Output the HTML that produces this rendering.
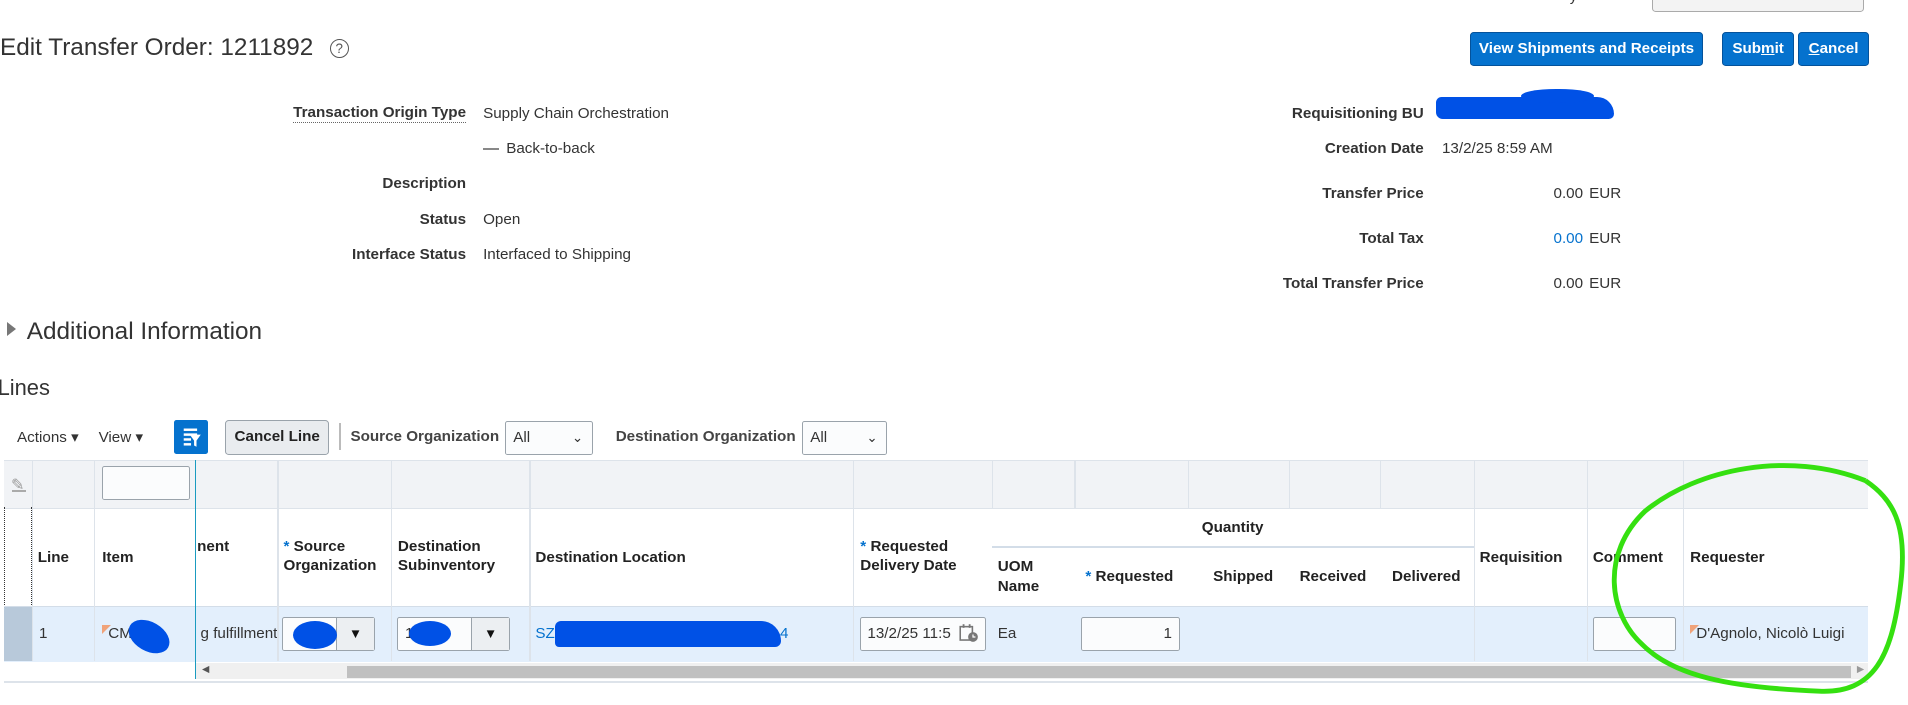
<!DOCTYPE html>
<html><head><meta charset="utf-8"><style>
html,body{margin:0;padding:0;background:#fff;overflow:hidden}
body{width:1908px;height:705px}
#w{position:relative;width:1568px;height:580px;zoom:1.21683;font-family:"Liberation Sans",Arial,sans-serif;font-size:12.5px;color:#333;overflow:hidden}
.a{position:absolute;white-space:nowrap}
.lb{font-weight:bold;text-align:right}
.btn{position:absolute;background:#0572ce;color:#fff;font-weight:bold;border:1px solid #04529b;border-radius:3px;text-align:center;line-height:26px;font-size:12.5px}
.vl{position:absolute;top:378px;width:1px;height:165px;background:#dde3ea}
.h{position:absolute;font-weight:bold;color:#222;line-height:16px}
.st{color:#0572ce}
.inp{position:absolute;background:#fbfcfd;border:1px solid #9aa3ab;border-radius:2px;box-sizing:border-box}
.dd{position:absolute;background:#eceff2;border-left:1px solid #9aa3ab;top:0;bottom:0;right:0;width:30px;text-align:center;line-height:26px;font-size:11px;color:#111}
.blob{position:absolute;background:#0051e6;border-radius:50%}
.tri{position:absolute;width:0;height:0;border-top:8px solid #f0a37a;border-right:8px solid transparent}
</style></head><body><div id="w">
<div class="a" style="left:1358px;top:-12px;width:172px;height:20px;border:1px solid #aaa;border-radius:3px;background:#f3f3f3"></div>
<div class="a" style="left:1290px;top:-9px;font-size:12px">y</div>

<div class="a" style="left:0;top:28px;font-size:20px;color:#333">Edit Transfer Order: 1211892</div>
<div class="a" style="left:271px;top:32px;width:14px;height:14px;border:1.3px solid #555;border-radius:50%;font-size:11px;text-align:center;line-height:14px;color:#555">?</div>

<div class="btn" style="left:1208px;top:26px;width:190px;height:27px">View Shipments and Receipts</div>
<div class="btn" style="left:1415px;top:26px;width:58px;height:27px"><span>Sub<u>m</u>it</span></div>
<div class="btn" style="left:1478px;top:26px;width:56px;height:27px"><u>C</u>ancel</div>

<div class="a lb" style="right:1185px;top:86px;border-bottom:1px dotted #666;line-height:13px;padding-bottom:1px">Transaction Origin Type</div>
<div class="a" style="left:397px;top:86px">Supply Chain Orchestration</div>
<div class="a" style="left:397px;top:122px;width:13px;height:1px;background:#888"></div>
<div class="a" style="left:416px;top:115px">Back-to-back</div>
<div class="a lb" style="right:1185px;top:144px">Description</div>
<div class="a lb" style="right:1185px;top:173px">Status</div>
<div class="a" style="left:397px;top:173px">Open</div>
<div class="a lb" style="right:1185px;top:202px">Interface Status</div>
<div class="a" style="left:397px;top:202px">Interfaced to Shipping</div>

<div class="a lb" style="right:398px;top:86px">Requisitioning BU</div>
<div class="a" style="left:1250px;top:86px;color:#555">usines</div>
<div class="a" style="left:1180px;top:80px;width:146px;height:18px;background:#0051e6;border-radius:10px 30px 9px 12px"></div>
<div class="a" style="left:1250px;top:73px;width:60px;height:12px;background:#0051e6;border-radius:50%"></div>
<div class="a lb" style="right:398px;top:115px">Creation Date</div>
<div class="a" style="left:1185px;top:115px">13/2/25 8:59 AM</div>
<div class="a lb" style="right:398px;top:152px">Transfer Price</div>
<div class="a" style="right:267px;top:152px">0.00</div><div class="a" style="left:1306px;top:152px">EUR</div>
<div class="a lb" style="right:398px;top:189px">Total Tax</div>
<div class="a" style="right:267px;top:189px;color:#0572ce">0.00</div><div class="a" style="left:1306px;top:189px">EUR</div>
<div class="a lb" style="right:398px;top:226px">Total Transfer Price</div>
<div class="a" style="right:267px;top:226px">0.00</div><div class="a" style="left:1306px;top:226px">EUR</div>

<div class="a" style="left:6px;top:265px;width:0;height:0;border-left:8px solid #777;border-top:6px solid transparent;border-bottom:6px solid transparent"></div>
<div class="a" style="left:22px;top:261px;font-size:20px">Additional Information</div>
<div class="a" style="left:-2px;top:308px;font-size:18px">Lines</div>

<div class="a" style="left:14px;top:352px">Actions ▾</div>
<div class="a" style="left:81px;top:352px">View ▾</div>
<div class="a" style="left:143px;top:345px;width:28px;height:28px;background:#0572ce;border-radius:2px">
<svg width="28" height="28" viewBox="0 0 28 28"><rect x="8" y="7" width="11" height="2" fill="#fff"/><rect x="8" y="11" width="11" height="2" fill="#fff"/><rect x="8" y="15" width="6" height="2" fill="#fff"/><rect x="8" y="19" width="6" height="2" fill="#fff"/><path d="M13 12h9l-3.5 5v5l-2-1v-4z" fill="#fff"/></svg></div>
<div class="a" style="left:185px;top:345px;width:84px;height:27px;background:#e9ecef;border:1px solid #9aa3ab;border-radius:3px;font-weight:bold;text-align:center;line-height:27px;color:#222">Cancel Line</div>
<div class="a" style="left:279px;top:348px;width:1px;height:22px;background:#bbb"></div>
<div class="a" style="left:288px;top:352px;font-weight:bold;color:#444">Source Organization</div>
<div class="inp" style="left:415px;top:346px;width:72px;height:28px;line-height:26px;padding-left:6px">All<span style="position:absolute;right:7px;top:0;font-size:11px">&#8964;</span></div>
<div class="a" style="left:506px;top:352px;font-weight:bold;color:#444">Destination Organization</div>
<div class="inp" style="left:659px;top:346px;width:70px;height:28px;line-height:26px;padding-left:6px">All<span style="position:absolute;right:7px;top:0;font-size:11px">&#8964;</span></div>

<!-- table -->
<div class="a" style="left:3px;top:378px;width:1532px;height:39px;background:#f1f3f6;border-top:1px solid #dde3ea;border-bottom:1px solid #dde3ea"></div>
<div class="a" style="left:3px;top:498px;width:1532px;height:45px;background:#e3effc;border-top:1px solid #d3dde8"></div>
<div class="a" style="left:3px;top:499px;width:23px;height:44px;background:#b8c9da"></div>
<div class="a" style="left:3px;top:417px;width:22px;height:80px;border-left:1px dotted #333;border-right:1px dotted #333"></div>
<div class="vl" style="left:26px"></div><div class="vl" style="left:77px"></div><div class="vl" style="left:228px"></div><div class="vl" style="left:321px"></div><div class="vl" style="left:435px"></div><div class="vl" style="left:701px"></div><div class="vl" style="left:815px;height:40px"></div><div class="vl" style="left:883px;height:40px"></div><div class="vl" style="left:976px;height:40px"></div><div class="vl" style="left:1059px;height:40px"></div><div class="vl" style="left:1134px;height:40px"></div><div class="vl" style="left:1211px"></div><div class="vl" style="left:1304px"></div><div class="vl" style="left:1383px"></div>
<div class="a" style="left:160px;top:378px;width:1px;height:180px;background:#1a9bc0"></div>
<div class="a" style="left:9px;top:390px;color:#999;font-size:13px">&#9998;</div>
<div class="a" style="left:10px;top:403px;width:11px;height:1px;background:#aaa"></div>
<div class="inp" style="left:84px;top:383px;width:72px;height:28px"></div>

<div class="h" style="left:31px;top:450px">Line</div>
<div class="h" style="left:84px;top:450px">Item</div>
<div class="h" style="left:162px;top:441px">nent</div>
<div class="h" style="left:233px;top:441px"><span class="st">*</span> Source<br>Organization</div>
<div class="h" style="left:327px;top:441px">Destination<br>Subinventory</div>
<div class="h" style="left:440px;top:450px">Destination Location</div>
<div class="h" style="left:707px;top:441px"><span class="st">*</span> Requested<br>Delivery Date</div>
<div class="h" style="left:815px;top:426px;width:396px;text-align:center">Quantity</div>
<div class="a" style="left:815px;top:449px;width:396px;height:1px;background:#d3dde8"></div>
<div class="h" style="left:820px;top:458px">UOM<br>Name</div>
<div class="h" style="left:892px;top:466px"><span class="st">*</span> Requested</div>
<div class="h" style="left:997px;top:466px">Shipped</div>
<div class="h" style="left:1068px;top:466px">Received</div>
<div class="h" style="left:1144px;top:466px">Delivered</div>
<div class="h" style="left:1216px;top:450px">Requisition</div>
<div class="h" style="left:1309px;top:450px">Comment</div>
<div class="h" style="left:1389px;top:450px">Requester</div>

<div class="a" style="left:32px;top:514px">1</div>
<div class="tri" style="left:84px;top:514px"></div>
<div class="a" style="left:89px;top:514px">CM</div>
<div class="blob" style="left:104px;top:511px;width:36px;height:24px;transform:rotate(30deg)"></div>
<div class="a" style="left:160px;top:514px;width:68px;overflow:hidden;direction:rtl">g fulfillment</div>
<div class="inp" style="left:232px;top:507px;width:76px;height:28px"><div class="dd">▼</div></div>
<div class="blob" style="left:241px;top:510px;width:36px;height:23px"></div>
<div class="inp" style="left:326px;top:507px;width:93px;height:28px;padding-left:6px;line-height:26px">1<div class="dd">▼</div></div>
<div class="blob" style="left:336px;top:510px;width:35px;height:21px"></div>
<div class="a" style="left:440px;top:514px;color:#0572ce">SZ</div>
<div class="a" style="left:641px;top:514px;color:#0572ce">4</div>
<div class="a" style="left:456px;top:510px;width:186px;height:22px;background:#0051e6;border-radius:12px 40px 12px 8px"></div>
<div class="inp" style="left:707px;top:507px;width:103px;height:28px;padding-left:5px;line-height:26px">13/2/25 11:5<span style="position:absolute;right:5px;top:4px;width:16px;height:16px"><svg width="16" height="16" viewBox="0 0 16 16"><rect x="1" y="3" width="10" height="11" fill="none" stroke="#777" stroke-width="1.3"/><rect x="3" y="1" width="1.5" height="3" fill="#777"/><rect x="8" y="1" width="1.5" height="3" fill="#777"/><circle cx="11.5" cy="11.5" r="4" fill="#777"/><path d="M11.5 9.5v2h2" stroke="#fff" fill="none"/></svg></span></div>
<div class="a" style="left:820px;top:514px">Ea</div>
<div class="inp" style="left:888px;top:507px;width:82px;height:28px;text-align:right;padding-right:6px;line-height:26px">1</div>
<div class="inp" style="left:1309px;top:507px;width:68px;height:28px"></div>
<div class="tri" style="left:1389px;top:514px"></div>
<div class="a" style="left:1394px;top:514px">D'Agnolo, Nicolò Luigi</div>

<div class="a" style="left:161px;top:545px;width:1374px;height:13px;background:#f0f0f0"></div>
<div class="a" style="left:285px;top:547px;width:1236px;height:10px;background:#c0c0c0"></div>
<div class="a" style="left:166px;top:546px;font-size:8px;color:#555">◀</div>
<div class="a" style="left:1526px;top:546px;font-size:8px;color:#999">▶</div>
<div class="a" style="left:3px;top:560px;width:1532px;height:1px;background:#dde3ea"></div>

<svg class="a" style="left:0;top:0" width="1568" height="580"><path d="M1533 395 C1470 370 1395 385 1352 420 C1315 455 1322 505 1350 530 C1375 555 1420 565 1495 568 C1540 570 1555 540 1562 480 C1568 430 1555 410 1533 395" fill="none" stroke="#35e010" stroke-width="4"/></svg>
</div></body></html>
